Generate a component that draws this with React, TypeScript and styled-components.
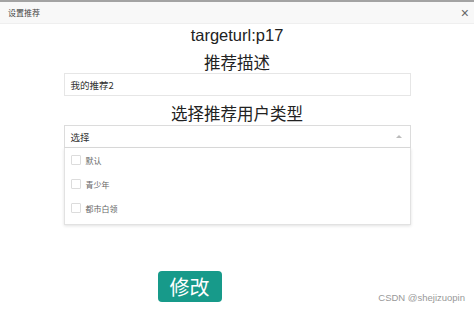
import React from 'react';
import styled, {createGlobalStyle} from 'styled-components';

const GlobalStyle = createGlobalStyle`
  html, body {
    margin: 0;
    padding: 0;
    background: #fff;
  }
  body {
    font-family: "Liberation Sans", "Noto Sans CJK SC", sans-serif;
  }
`;

const Page = styled.div`
  position: relative;
  width: 474px;
  height: 310px;
  overflow: hidden;
  border-top: 2px solid #a3a3a3;
  box-sizing: border-box;
  background: #fff;
`;

const Header = styled.div`
  height: 22px;
  display: flex;
  align-items: center;
  justify-content: space-between;
  padding: 0 5px 0 8px;
  background: #f8f8f8;
  border-bottom: 1px solid #efefef;
  box-sizing: border-box;
`;

const HeaderTitle = styled.div`
  font-family: "Noto Sans CJK SC", sans-serif;
  font-size: 8px;
  color: #444;
`;

const Close = styled.div`
  font-family: "Liberation Sans", sans-serif;
  font-size: 14px;
  color: #666;
  line-height: 1;
`;

const Body = styled.div`
  width: 347px;
  margin: 0 auto;
  display: flex;
  flex-direction: column;
`;

const Heading = styled.div<{$top: number}>`
  margin-top: ${p => p.$top}px;
  height: 20px;
  line-height: 20px;
  text-align: center;
  font-family: "Liberation Sans", "Noto Sans CJK SC", sans-serif;
  font-size: 16.5px;
  color: #222;
`;

const Field = styled.div`
  height: 23px;
  display: flex;
  align-items: center;
  padding: 0 6px;
  border: 1px solid #e6e6e6;
  box-sizing: border-box;
  font-family: "Noto Sans CJK SC", sans-serif;
  font-size: 9.5px;
  color: #333;
`;

const SelectBox = styled(Field)`
  margin-top: 1px;
  justify-content: space-between;
  border-color: #dcdcdc;
`;

const Caret = styled.div`
  width: 0;
  height: 0;
  border-left: 3px solid transparent;
  border-right: 3px solid transparent;
  border-bottom: 3px solid #bbb;
  margin-right: 2px;
`;

const Dropdown = styled.div`
  height: 77px;
  border: 1px solid #e2e2e2;
  border-top: none;
  box-shadow: 0 1px 3px rgba(0, 0, 0, 0.12);
  box-sizing: border-box;
  display: flex;
  flex-direction: column;
`;

const Option = styled.div`
  height: 24px;
  display: flex;
  align-items: center;
  gap: 5px;
  padding-left: 6px;
  font-family: "Noto Sans CJK SC", sans-serif;
  font-size: 8px;
  color: #666;
`;

const Check = styled.span`
  width: 10px;
  height: 10px;
  border: 1px solid #dcdcdc;
  border-radius: 1px;
  box-sizing: border-box;
  background: #fff;
`;

const Submit = styled.button`
  align-self: flex-start;
  margin: 46px 0 0 94px;
  width: 64px;
  height: 31px;
  border: none;
  border-radius: 4px;
  background: #179a8a;
  color: #fff;
  font-family: "Noto Sans CJK SC", sans-serif;
  font-size: 20px;
  line-height: 31px;
  padding: 0;
`;

const Watermark = styled.div`
  position: absolute;
  right: 9px;
  bottom: 7px;
  font-family: "Liberation Sans", sans-serif;
  font-size: 9.5px;
  color: #999;
`;

const options = ['默认', '青少年', '都市白领'];

export default function App() {
  return (
    <Page>
      <GlobalStyle />
      <Header>
        <HeaderTitle>设置推荐</HeaderTitle>
        <Close>×</Close>
      </Header>
      <Body>
        <Heading $top={1}>targeturl:p17</Heading>
        <Heading $top={8}>推荐描述</Heading>
        <Field>我的推荐2</Field>
        <Heading $top={8}>选择推荐用户类型</Heading>
        <SelectBox>
          <span>选择</span>
          <Caret />
        </SelectBox>
        <Dropdown>
          {options.map(o => (
            <Option key={o}>
              <Check />
              {o}
            </Option>
          ))}
        </Dropdown>
        <Submit>修改</Submit>
      </Body>
      <Watermark>CSDN @shejizuopin</Watermark>
    </Page>
  );
}
